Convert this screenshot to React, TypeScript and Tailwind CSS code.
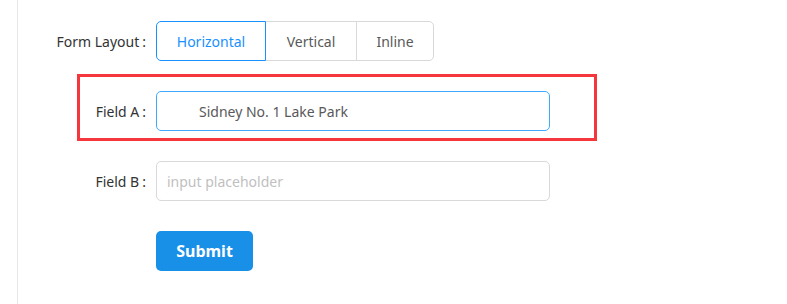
import React, { useState } from 'react';

const layouts = ['Horizontal', 'Vertical', 'Inline'];

const Label: React.FC<{ text: string }> = ({ text }) => (
  <div className="w-[138px] shrink-0 pr-[10px] text-right text-[14px] text-[#333]">
    {text}
    <span className="ml-[3px]">:</span>
  </div>
);

export default function App() {
  const [layout, setLayout] = useState('Horizontal');

  return (
    <div
      className="relative h-[304px] w-[787px] bg-white"
      style={{ fontFamily: '"Noto Sans", "Open Sans", sans-serif' }}
    >
      <div className="ml-[17px] flex h-full flex-col gap-[30px] border-l border-[#e8e8e8] pt-[21px]">
        <div className="flex h-[40px] items-center">
          <Label text="Form Layout" />
          <div className="flex h-[40px]">
            {layouts.map((name, i) => {
              const active = layout === name;
              const widths = ['w-[110px]', 'w-[92px]', 'w-[78px]'];
              return (
                <button
                  key={name}
                  onClick={() => setLayout(name)}
                  className={`${widths[i]} h-[40px] border text-[14px] ${
                    i === 0 ? 'rounded-l-[5px]' : '-ml-px'
                  } ${i === layouts.length - 1 ? 'rounded-r-[5px]' : ''} ${
                    active
                      ? 'relative z-10 border-[#1890ff] text-[#1890ff]'
                      : 'border-[#d9d9d9] text-[#595959]'
                  }`}
                >
                  {name}
                </button>
              );
            })}
          </div>
        </div>

        <div className="flex h-[40px] items-center">
          <Label text="Field A" />
          <input
            defaultValue="Sidney No. 1 Lake Park"
            className="h-[40px] w-[394px] rounded-[5px] border border-[#40a9ff] pl-[42px] text-[14px] text-[#595959] outline-none"
          />
        </div>

        <div className="flex h-[40px] items-center">
          <Label text="Field B" />
          <input
            placeholder="input placeholder"
            className="h-[40px] w-[394px] rounded-[5px] border border-[#d9d9d9] pl-[10px] text-[14px] text-[#595959] outline-none placeholder:text-[#bfbfbf]"
          />
        </div>

        <div className="flex h-[40px] items-center">
          <div className="w-[138px] shrink-0" />
          <button className="h-[40px] w-[97px] rounded-[5px] bg-[#1890e8] text-[16px] font-bold text-white">
            Submit
          </button>
        </div>
      </div>

      {/* highlight overlay */}
      <div className="pointer-events-none absolute left-[77px] top-[74px] h-[67px] w-[520px] border-[3px] border-[#f5363c]" />
    </div>
  );
}
